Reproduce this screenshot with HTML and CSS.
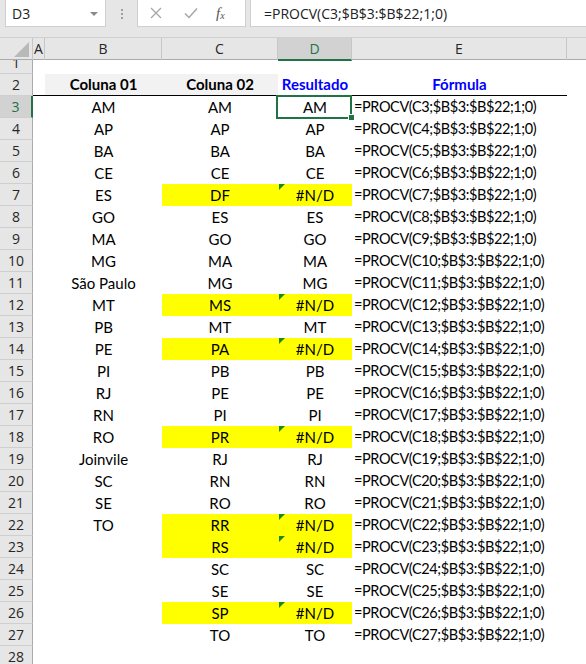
FILE: index.html
```html
<!DOCTYPE html>
<html lang="pt">
<head>
    <meta charset="UTF-8">
    <title>PROCV</title>
    <link rel="stylesheet" href="styles.css">
</head>
<body>
    <div class="toolbar">
        <div class="namebox">D3<span class="arrow"></span></div>
        <div class="dots"><i></i><i></i><i></i></div>
        <div class="actions">
            <svg class="ico" width="12" height="12" viewBox="0 0 12 12"><path d="M1 1L11 11M11 1L1 11" stroke="#a6a6a6" stroke-width="1.3" fill="none"/></svg>
            <svg class="ico" width="14" height="12" viewBox="0 0 14 12"><path d="M1 6.5L5 10.5L13 1.5" stroke="#a6a6a6" stroke-width="1.5" fill="none"/></svg>
            <span class="fx">f<sub>x</sub></span>
        </div>
        <div class="formula">=PROCV(C3;$B$3:$B$22;1;0)</div>
    </div>

    <div class="sheet">
        <div class="row head">
            <div class="corner"><span class="tri"></span></div>
            <div class="col">A</div>
            <div class="col">B</div>
            <div class="col">C</div>
            <div class="col sel">D</div>
            <div class="col">E</div>
            <div class="col last"></div>
        </div>
        <div class="row first">
            <div class="rh"><span>1</span></div>
            <div></div><div></div><div></div><div></div><div></div><div></div>
        </div>
        <div class="row titles">
            <div class="rh">2</div>
            <div class="c"></div>
            <div class="c th grey">Coluna 01</div>
            <div class="c th grey">Coluna 02</div>
            <div class="c th blue">Resultado</div>
            <div class="c th blue">Fórmula</div>
            <div></div>
        </div>
        <div id="rows"></div>
    </div>

    <script>
      // Coluna B (lista de busca) e coluna C (valores procurados)
      const colB = ["AM", "AP", "BA", "CE", "ES", "GO", "MA", "MG", "São Paulo", "MT",
                    "PB", "PE", "PI", "RJ", "RN", "RO", "Joinvile", "SC", "SE", "TO"];
      const colC = ["AM", "AP", "BA", "CE", "DF", "ES", "GO", "MA", "MG", "MS", "MT", "PA",
                    "PB", "PE", "PI", "PR", "RJ", "RN", "RO", "RR", "RS", "SC", "SE", "SP", "TO"];

      const box = document.getElementById("rows");

      for (let r = 3; r <= 28; r++) {
        const b = colB[r - 3] || "";
        const c = colC[r - 3] || "";
        const found = colB.includes(c);
        const err = c && !found;
        const row = document.createElement("div");
        row.className = "row";
        row.innerHTML = `
          <div class="rh ${r === 3 ? "active" : ""}">${r}</div>
          <div class="c"></div>
          <div class="c">${b}</div>
          <div class="c ${err ? "yellow" : ""}">${c}</div>
          <div class="c ${err ? "yellow err" : ""} ${r === 3 ? "current" : ""}">${c ? (err ? "#N/D" : c) : ""}</div>
          <div class="c left">${c ? `=PROCV(C${r};$B$3:$B$22;1;0)` : ""}</div>
          <div class="c"></div>
        `;
        box.appendChild(row);
      }
    </script>
</body>
</html>
```

FILE: styles.css
```css
body {
    margin: 0;
    background-color: #fff;
    font-family: Lato, "Liberation Sans", sans-serif;
    color: #000;
    width: 586px;
    height: 664px;
    overflow: hidden;
}

/* barra de fórmulas */
.toolbar {
    display: flex;
    height: 37px;
    background-color: #e6e6e6;
    border-bottom: 1px solid #d0d0d0;
    font-family: "Open Sans", sans-serif;
    font-size: 14px;
    color: #222;
}

.namebox, .actions, .formula {
    box-sizing: border-box;
    height: 28px;
    margin-top: -1px;
    background-color: #fff;
    border: 1px solid #cfcfcf;
    display: flex;
    align-items: center;
}

.namebox {
    margin-left: 5px;
    width: 101px;
    padding-left: 6px;
    position: relative;
}

.arrow {
    position: absolute;
    right: 7px;
    top: 12px;
    border-left: 4px solid transparent;
    border-right: 4px solid transparent;
    border-top: 4px solid #8a8a8a;
}

.dots {
    width: 31px;
    display: flex;
    flex-direction: column;
    align-items: center;
    padding-top: 9px;
    gap: 2px;
}

.dots i {
    width: 2px;
    height: 2px;
    background-color: #a0a0a0;
}

.actions {
    width: 109px;
    padding-left: 12px;
    gap: 22px;
}

.fx {
    font-family: "Liberation Serif", serif;
    font-style: italic;
    font-size: 15px;
    color: #555;
    margin-left: -4px;
}

.fx sub {
    font-size: 10px;
    vertical-align: -1px;
}

.formula {
    margin-left: 4px;
    flex: 1;
    padding-left: 13px;
    border-right: none;
}

/* planilha */
.row {
    display: grid;
    grid-template-columns: 33px 12px 117px 116px 74px 215px 19px;
    height: 22px;
    font-size: 15px;
}

.head {
    background-color: #e6e6e6;
    border-bottom: 1px solid #ababab;
    box-sizing: border-box;
    color: #262626;
}

.corner {
    display: flex;
    justify-content: flex-end;
    align-items: flex-end;
    padding: 0 3px 3px 0;
    border-right: 1px solid #c6c6c6;
}

.tri {
    width: 0;
    height: 0;
    border-left: 15px solid transparent;
    border-bottom: 15px solid #b9b9b9;
}

.col {
    text-align: center;
    line-height: 21px;
    border-right: 1px solid #c6c6c6;
    font-family: "Open Sans", sans-serif;
    font-size: 14px;
}

.col.sel {
    background-color: #d2d2d2;
    color: #217346;
    border-bottom: 2px solid #217346;
    margin-bottom: -1px;
}

.col.last {
    border-right: none;
}

.rh {
    background-color: #e6e6e6;
    border-right: 1px solid #ababab;
    border-bottom: 1px solid #cfcfcf;
    box-sizing: border-box;
    text-align: center;
    line-height: 21px;
    font-family: "Open Sans", sans-serif;
    font-size: 14px;
    color: #262626;
}

.rh.active {
    background-color: #d2d2d2;
    color: #217346;
    border-right: 2px solid #217346;
}

.first {
    height: 14px;
}

.first .rh {
    overflow: hidden;
    display: flex;
    justify-content: center;
    align-items: flex-end;
}

.first .rh span {
    line-height: 21px;
    flex-shrink: 0;
}

.c {
    text-align: center;
    line-height: 22px;
    white-space: nowrap;
}

.c.left {
    text-align: left;
    padding-left: 2px;
    font-size: 14.5px;
    letter-spacing: -0.4px;
}

.titles .c {
    border-bottom: 1px solid #000;
    box-sizing: border-box;
    line-height: 21px;
}

.th {
    font-weight: bold;
}

.grey {
    background-color: #f2f2f2;
}

.blue {
    color: #0000ff;
}

.yellow {
    background-color: #ffff00;
}

.err {
    position: relative;
}

.err::before {
    content: "";
    position: absolute;
    left: 1px;
    top: 0;
    border-top: 6px solid #1b8a1b;
    border-right: 6px solid transparent;
}

.current {
    position: relative;
}

.current::after {
    content: "";
    position: absolute;
    left: -2px;
    top: -1px;
    right: 0;
    bottom: -1px;
    border: 2px solid #217346;
}

.current::before {
    content: "";
    position: absolute;
    right: -3px;
    bottom: -3px;
    width: 5px;
    height: 5px;
    background-color: #217346;
    border: 1px solid #fff;
    z-index: 1;
}
```
